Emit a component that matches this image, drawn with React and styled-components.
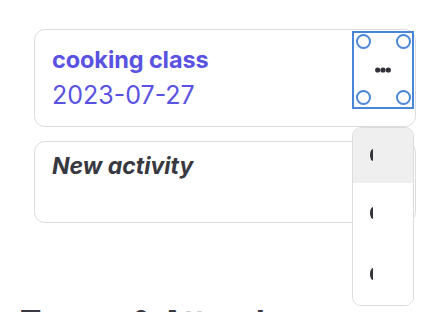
import React from "react";
import styled, { createGlobalStyle } from "styled-components";

const Global = createGlobalStyle`
  html, body { margin: 0; padding: 0; background: #ffffff; }
  body { font-family: Inter, "Noto Sans", sans-serif; overflow: hidden; }
`;

const Page = styled.div`
  width: 446px;
  height: 312px;
  box-sizing: border-box;
  padding: 29px 30px 0 20px;
  display: flex;
  flex-direction: column;
  overflow: hidden;
`;

const List = styled.div`
  display: flex;
  flex-direction: column;
  gap: 14px;
  margin-left: 14px;
`;

const Card = styled.div`
  position: relative;
  box-sizing: border-box;
  height: ${(p) => p.$h}px;
  border: 1.5px solid #dcdcdc;
  border-radius: 11px;
  background: #fff;
  display: flex;
  align-items: flex-start;
  justify-content: space-between;
`;

const Info = styled.div`
  display: flex;
  flex-direction: column;
  gap: 6px;
  padding: ${(p) => p.$pt}px 0 0 17px;
`;

const Title = styled.div`
  font-size: 23.5px;
  font-weight: 700;
  color: #5a52e2;
  line-height: 28px;
  letter-spacing: -0.1px;
`;

const DateText = styled.div`
  font-size: 25px;
  font-weight: 400;
  color: #5a52e2;
  line-height: 30px;
`;

const Draft = styled.div`
  font-size: 23px;
  font-weight: 700;
  font-style: italic;
  color: #383841;
  line-height: 28px;
`;

const MenuWrap = styled.div`
  position: relative;
  width: 62px;
  height: 78px;
  margin: 0.5px 1px 0 0;
  display: flex;
  align-items: center;
  justify-content: center;
`;

const Selection = styled.div`
  position: absolute;
  inset: 0;
  border: 2px solid #4a86d8;
  pointer-events: none;
`;

const Handle = styled.span`
  position: absolute;
  box-sizing: border-box;
  width: 15px;
  height: 15px;
  border-radius: 50%;
  border: 2px solid #4a86d8;
  background: #fff;
  ${(p) => (p.$top ? "top: 1.5px;" : "bottom: 1.5px;")}
  ${(p) => (p.$left ? "left: 1.5px;" : "right: 1.5px;")}
`;

const Dropdown = styled.div`
  position: absolute;
  top: 96px;
  left: 0;
  width: 62px;
  box-sizing: border-box;
  border: 1.5px solid #dcdcdc;
  border-radius: 9px;
  background: #fff;
  overflow: hidden;
  display: flex;
  flex-direction: column;
  z-index: 2;
`;

const Item = styled.div`
  height: ${(p) => (p.$active ? 55 : 61)}px;
  display: flex;
  align-items: center;
  padding-left: 17px;
  background: ${(p) => (p.$active ? "#efefef" : "#fff")};
`;

const Clip = styled.span`
  display: block;
  width: 3px;
  height: 12px;
  background: #333338;
  border-radius: 3px 0 0 3px / 6px 0 0 6px;
`;

const Heading = styled.h2`
  margin: 81px 0 0 0;
  font-size: 32px;
  font-weight: 700;
  color: #383841;
  line-height: 38px;
  white-space: nowrap;
`;

function Dots() {
  return (
    <svg width="16" height="6" viewBox="0 0 16 6">
      <circle cx="2.7" cy="3" r="2.6" fill="#303038" />
      <circle cx="8" cy="3" r="2.6" fill="#303038" />
      <circle cx="13.3" cy="3" r="2.6" fill="#303038" />
    </svg>
  );
}

export default function App() {
  return (
    <>
      <Global />
      <Page>
        <List>
          <Card $h={98}>
            <Info $pt={16}>
              <Title>cooking class</Title>
              <DateText>2023-07-27</DateText>
            </Info>
            <MenuWrap>
              <Dots />
              <Selection>
                <Handle $top $left />
                <Handle $top />
                <Handle $left />
                <Handle />
              </Selection>
              <Dropdown>
                <Item $active><Clip /></Item>
                <Item><Clip /></Item>
                <Item><Clip /></Item>
              </Dropdown>
            </MenuWrap>
          </Card>
          <Card $h={82}>
            <Info $pt={10}>
              <Draft>New activity</Draft>
            </Info>
          </Card>
        </List>
        <Heading>Teams &amp; Attendees</Heading>
      </Page>
    </>
  );
}
